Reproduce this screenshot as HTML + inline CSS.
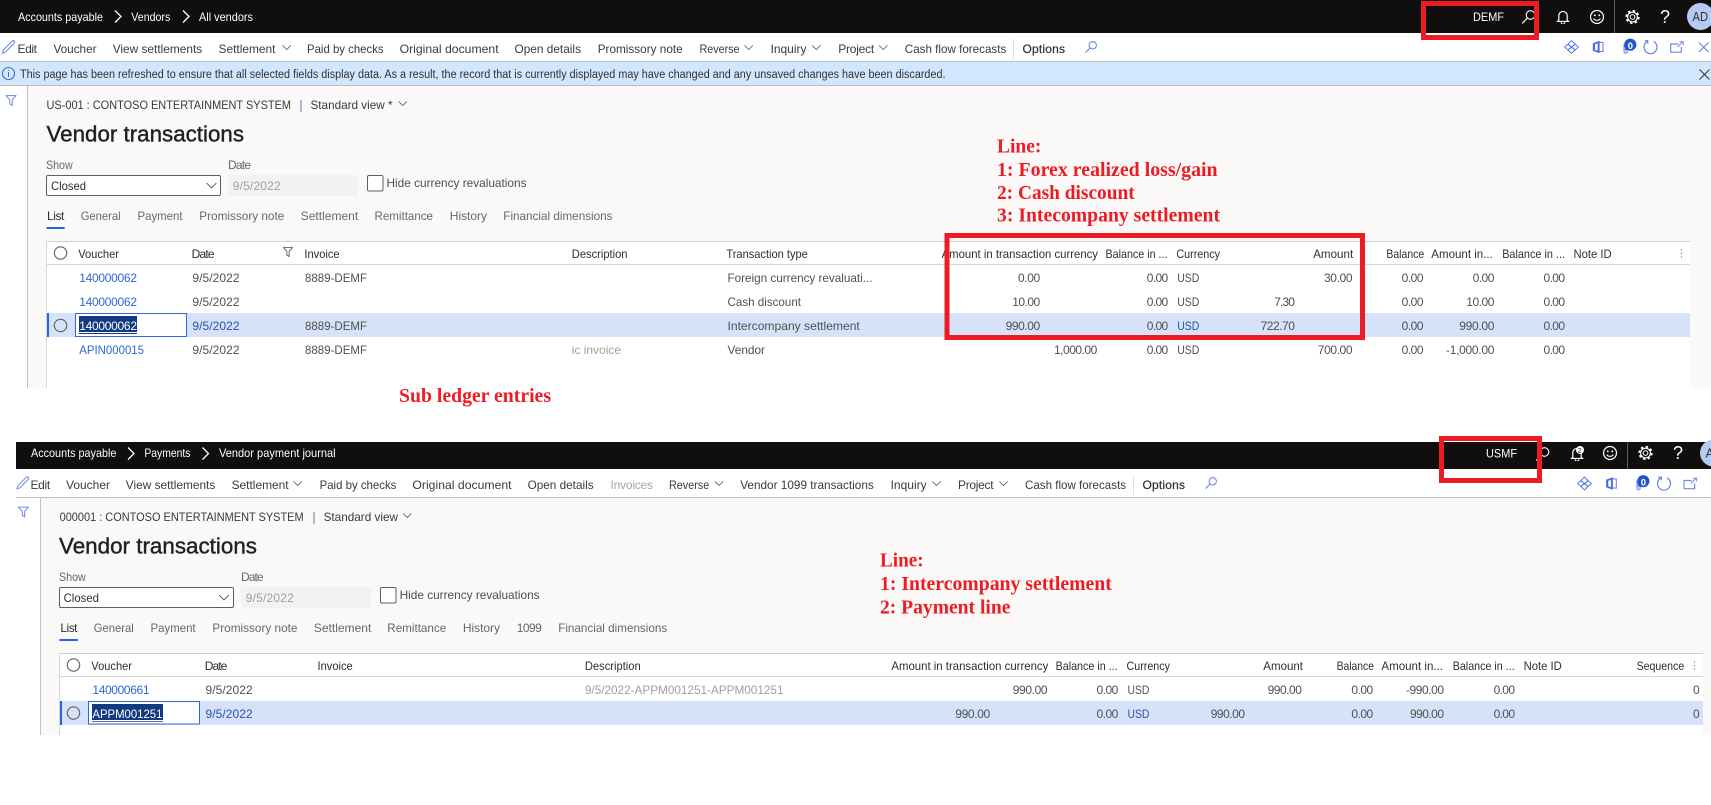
<!DOCTYPE html>
<html lang="en"><head><meta charset="utf-8"><title>Vendor transactions</title>
<style>
html,body{margin:0;padding:0;background:#fff;width:1711px;height:805px;overflow:hidden}
svg{display:block}
text{font-family:"Liberation Sans",sans-serif;font-size:12px;fill:#505050;white-space:pre}
.w{fill:#fff}.m{fill:#3b3a39}.o{fill:#252423;font-weight:bold;font-size:11.5px}.i{fill:#323130;font-size:11.5px}
.t{fill:#6a6866}.h{fill:#2f2e2d}.l{fill:#2f66d8}.s{fill:#2b55a8}.d{fill:#a19f9d}.c{fill:#323130;font-size:11.5px}
.n{font-size:22px;fill:#201f1e;stroke:#201f1e;stroke-width:.4}
.a{font-family:"Liberation Serif",serif;font-weight:bold;font-size:20px;fill:#ed1c24}
.ic{fill:none;stroke:#5a78e6;stroke-width:1.1}.wi{fill:none;stroke:#fff;stroke-width:1.2}.dk{fill:none;stroke:#605e5c;stroke-width:1.1}
</style></head><body>
<svg width="1711" height="805" viewBox="0 0 1711 805" xmlns="http://www.w3.org/2000/svg">
<defs>
<symbol id="chev" viewBox="0 0 10 6"><path d="M.5.5 5 5 9.5.5" fill="none" stroke="#605e5c" stroke-width=".9"/></symbol>
<symbol id="bc" viewBox="0 0 8 13"><path d="M1 .5 7 6.5 1 12.5" fill="none" stroke="#fff" stroke-width="1.3"/></symbol>
<symbol id="srch" viewBox="0 0 14 14"><circle cx="9" cy="5" r="4.3" fill="none" stroke="currentColor" stroke-width="1.1"/><path d="M5.9 8.1.7 13.4" stroke="currentColor" stroke-width="1.2"/></symbol>
<symbol id="bell" viewBox="0 0 14 15"><path d="M2.5 11V6a4.5 4.5 0 0 1 9 0v5l1.5 1.3H1Z" fill="none" stroke="#fff" stroke-width="1.3"/><path d="M5 13.2a2 2 0 0 0 4 0" fill="none" stroke="#fff" stroke-width="1.2"/></symbol>
<symbol id="smile" viewBox="0 0 16 16"><circle cx="8" cy="8" r="6.9" fill="none" stroke="#fff" stroke-width="1.3"/><circle cx="5.6" cy="6.2" r="1" fill="#fff"/><circle cx="10.4" cy="6.2" r="1" fill="#fff"/><path d="M4.4 9.6c1.6 2.6 5.6 2.6 7.2 0" fill="none" stroke="#fff" stroke-width="1.2"/></symbol>
<symbol id="gear" viewBox="0 0 16 16"><circle cx="8" cy="8" r="2.5" fill="none" stroke="#fff" stroke-width="1.1"/><circle cx="8" cy="8" r="5.2" fill="none" stroke="#fff" stroke-width="1.2"/><circle cx="8" cy="8" r="6.6" fill="none" stroke="#fff" stroke-width="2" stroke-dasharray="2.6 2.58"/></symbol>
<symbol id="diam" viewBox="0 0 15 14"><path d="M7.5.6 11 4 7.5 7 4 4ZM3.8 4.2 7.2 7 3.8 10 .6 7ZM11.2 4.2 14.4 7 11.2 10 7.8 7ZM7.5 7.2 11 10 7.5 13.4 4 10Z" fill="none" stroke="#5a78e6" stroke-width="1"/></symbol>
<symbol id="off" viewBox="0 0 12 14"><path d="M.8 3.2 7.6.8v12.4L.8 10.8Z" fill="#4a6ee0"/><path d="M3 4.2v5.6l2.6.8V3.4Z" fill="#fff"/><path d="M7.6 2.4h3.4v9.2H7.6" fill="none" stroke="#6d86e8" stroke-width="1.1"/></symbol>
<symbol id="clip" viewBox="0 0 15 16"><path d="M2.6 5.5v7.6a1.5 1.5 0 0 0 3 0V4.6" fill="none" stroke="#8a8fe8" stroke-width="1.4"/><circle cx="8.8" cy="6.2" r="6.1" fill="#1f57c8"/><path d="M4 8.6 3.4 12 6.6 10.6Z" fill="#1f57c8"/></symbol>
<symbol id="ref" viewBox="0 0 15 15"><path d="M4.4 1.9a6.5 6.5 0 1 0 6.2 0" fill="none" stroke="#5a78e6" stroke-width="1.1"/><path d="M1.8 1.2h3v3" fill="none" stroke="#5a78e6" stroke-width="1.1"/></symbol>
<symbol id="open" viewBox="0 0 14 12"><path d="M8.5 3H.7v8.2h10.6V6" fill="none" stroke="#7488e8" stroke-width="1.2"/><path d="M7.5 6 13 .8M9.5.7H13.3V4" fill="none" stroke="#7488e8" stroke-width="1"/></symbol>
<symbol id="x" viewBox="0 0 11 11"><path d="M.5.5 10.5 10.5M10.5.5.5 10.5" fill="none" stroke="currentColor" stroke-width="1"/></symbol>
<symbol id="filt" viewBox="0 0 11 11"><path d="M.6.6H10.4L6.7 5V10.4L4.3 9V5Z" fill="none" stroke="currentColor" stroke-width="1"/></symbol>
<symbol id="pen" viewBox="0 0 15 15"><path d="M1 14 2 10.6 11.4 1.2a1.6 1.6 0 0 1 2.3 2.3L4.3 12.9Z" fill="none" stroke="#6f86e8" stroke-width="1.1"/></symbol>
</defs>

<!-- PANEL 1 -->
<rect width="1711" height="33" fill="#100f0e"/>
<rect y="33" width="1711" height="28" fill="#fff"/>
<rect y="61" width="1711" height="1" fill="#c4c2c0"/>
<rect y="62" width="1711" height="23" fill="#d0e7fd"/>
<rect y="85" width="1711" height="1" fill="#bdbcbb"/>
<rect x="28" y="86" width="1683" height="302" fill="#faf9f8"/>
<rect x="27" y="86" width="1" height="302" fill="#c4c2c0"/>
<rect x="46.5" y="241" width="1643.5" height="147" fill="#fff"/>
<rect x="46" y="241" width="1644" height="1" fill="#d0cfce"/>
<rect x="46" y="241" width="1" height="147" fill="#d8d7d6"/>
<rect x="47" y="264" width="1643" height="1" fill="#d8d7d6"/>

<text class="w" x="18" y="21" textLength="85" lengthAdjust="spacingAndGlyphs">Accounts payable</text>
<use href="#bc" x="114" y="10" width="8" height="13"/>
<text class="w" x="131.3" y="21" textLength="39" lengthAdjust="spacingAndGlyphs">Vendors</text>
<use href="#bc" x="182" y="10" width="8" height="13"/>
<text class="w" x="199" y="21" textLength="54" lengthAdjust="spacingAndGlyphs">All vendors</text>

<use href="#pen" x="1.5" y="40" width="14" height="14"/>
<text class="m" x="17.5" y="53" textLength="19.5">Edit</text>
<text class="m" x="53.5" y="53" textLength="43" lengthAdjust="spacingAndGlyphs">Voucher</text>
<text class="m" x="112.7" y="53" textLength="89.5" lengthAdjust="spacingAndGlyphs">View settlements</text>
<text class="m" x="218.5" y="53" textLength="57" lengthAdjust="spacingAndGlyphs">Settlement</text>
<use href="#chev" x="282" y="45" width="9.5" height="5.5"/>
<text class="m" x="307" y="53" textLength="76.6" lengthAdjust="spacingAndGlyphs">Paid by checks</text>
<text class="m" x="399.6" y="53" textLength="99" lengthAdjust="spacingAndGlyphs">Original document</text>
<text class="m" x="514.5" y="53" textLength="66.5" lengthAdjust="spacingAndGlyphs">Open details</text>
<text class="m" x="597.7" y="53" textLength="85" lengthAdjust="spacingAndGlyphs">Promissory note</text>
<text class="m" x="699.5" y="53" textLength="40" lengthAdjust="spacingAndGlyphs">Reverse</text>
<use href="#chev" x="744" y="45" width="9.5" height="5.5"/>
<text class="m" x="770.5" y="53" textLength="36">Inquiry</text>
<use href="#chev" x="811.6" y="45" width="9.5" height="5.5"/>
<text class="m" x="838.2" y="53" textLength="36">Project</text>
<use href="#chev" x="878.5" y="45" width="9.5" height="5.5"/>
<text class="m" x="904.8" y="53" textLength="101.5" lengthAdjust="spacingAndGlyphs">Cash flow forecasts</text>
<rect x="1013" y="39" width="1" height="20" fill="#e1dfdd"/>
<text class="h" x="1022.5" y="53" textLength="42.5" style="stroke:#2f2e2d;stroke-width:.2">Options</text>
<use href="#srch" x="1085" y="41" width="12" height="12" color="#5a78e6"/>

<text class="w" x="1473" y="21" textLength="31" lengthAdjust="spacingAndGlyphs">DEMF</text>
<use href="#srch" x="1521.5" y="10" width="14" height="14" color="#fff"/>
<use href="#bell" x="1556.5" y="10" width="13" height="14"/>
<use href="#smile" x="1589.5" y="9.5" width="15" height="15"/>
<rect x="1614" y="0" width="1" height="33" fill="#605e5c"/>
<use href="#gear" x="1625" y="9.5" width="15" height="15"/>
<text class="w" x="1660" y="23" style="font-size:18px" textLength="10">?</text>
<circle cx="1700.5" cy="16.5" r="13.5" fill="#b6cbf3"/>
<text x="1692.5" y="21" style="fill:#323130;font-size:12.5px" textLength="15.5" lengthAdjust="spacingAndGlyphs">AD</text>

<use href="#diam" x="1564" y="40" width="15" height="14"/>
<use href="#off" x="1592" y="40" width="12" height="14"/>
<use href="#clip" x="1621.5" y="38.5" width="15" height="16"/>
<text class="w" x="1627.8" y="48.8" style="font-size:9.5px;font-weight:bold">0</text>
<use href="#ref" x="1643" y="39.5" width="15" height="15"/>
<use href="#open" x="1670" y="41" width="14" height="12"/>
<use href="#x" x="1698.5" y="42" width="10.5" height="10.5" color="#5a78e6"/>

<circle cx="8.5" cy="73.5" r="6" class="ic" style="stroke:#4a68c8"/>
<path d="M8.5 72v5M8.5 69.6v1.2" stroke="#4a68c8" stroke-width="1"/>
<text class="i" x="20" y="78" textLength="925.5" lengthAdjust="spacingAndGlyphs">This page has been refreshed to ensure that all selected fields display data. As a result, the record that is currently displayed may have changed and any unsaved changes have been discarded.</text>
<use href="#x" x="1699" y="69" width="11" height="11" color="#323130"/>

<use href="#filt" x="5.5" y="95" width="11" height="11" color="#6f86e8"/>
<text class="m" x="46.5" y="109" textLength="244.5" lengthAdjust="spacingAndGlyphs">US-001 : CONTOSO ENTERTAINMENT SYSTEM</text>
<rect x="300.5" y="100" width="1" height="12" fill="#5d7cc4"/>
<text class="m" x="310.5" y="109" textLength="82" lengthAdjust="spacingAndGlyphs">Standard view *</text>
<use href="#chev" x="398" y="101" width="9.5" height="5.5"/>
<text class="n" x="46.5" y="141.5" textLength="197.5" lengthAdjust="spacingAndGlyphs">Vendor transactions</text>

<text class="t" x="46" y="169" textLength="26.7" lengthAdjust="spacingAndGlyphs">Show</text>
<text class="t" x="228" y="169" textLength="23">Date</text>
<rect x="46.5" y="175.5" width="174" height="20" rx="1.5" fill="#fff" stroke="#605e5c"/>
<text class="h" x="51" y="190" textLength="35" lengthAdjust="spacingAndGlyphs">Closed</text>
<use href="#chev" x="206" y="182.5" width="11" height="6.5"/>
<rect x="228" y="175" width="130" height="21" rx="1" fill="#f3f2f1"/>
<text class="d" x="232.7" y="190" textLength="48">9/5/2022</text>
<rect x="367.5" y="175.5" width="15.5" height="15.5" rx="1.5" fill="#fff" stroke="#605e5c"/>
<text class="t" x="386.5" y="187" textLength="140" style="fill:#4f4e4d" lengthAdjust="spacingAndGlyphs">Hide currency revaluations</text>

<text class="h" x="47" y="220" textLength="17.4">List</text>
<text class="t" x="80.7" y="220" textLength="40" lengthAdjust="spacingAndGlyphs">General</text>
<text class="t" x="137.5" y="220" textLength="45" lengthAdjust="spacingAndGlyphs">Payment</text>
<text class="t" x="199.3" y="220" textLength="85" lengthAdjust="spacingAndGlyphs">Promissory note</text>
<text class="t" x="300.7" y="220" textLength="57.5" lengthAdjust="spacingAndGlyphs">Settlement</text>
<text class="t" x="374.5" y="220" textLength="58.5" lengthAdjust="spacingAndGlyphs">Remittance</text>
<text class="t" x="449.8" y="220" textLength="37.2">History</text>
<text class="t" x="503.3" y="220" textLength="109.2" lengthAdjust="spacingAndGlyphs">Financial dimensions</text>
<rect x="46.5" y="227" width="18.2" height="2" fill="#2266e3"/>

<circle cx="60.5" cy="253" r="6.2" class="dk"/>
<text class="h" x="78.2" y="258" textLength="40.8" lengthAdjust="spacingAndGlyphs">Voucher</text>
<text class="h" x="191.6" y="258" textLength="23">Date</text>
<use href="#filt" x="283" y="247" width="10" height="10" color="#605e5c"/>
<text class="h" x="304.4" y="258" textLength="35.2" lengthAdjust="spacingAndGlyphs">Invoice</text>
<text class="h" x="571.8" y="258" textLength="55.7" lengthAdjust="spacingAndGlyphs">Description</text>
<text class="h" x="726.4" y="258" textLength="81.4" lengthAdjust="spacingAndGlyphs">Transaction type</text>
<text class="h" x="941.6" y="258" textLength="156.4" lengthAdjust="spacingAndGlyphs">Amount in transaction currency</text>
<text class="h" x="1105.5" y="258" textLength="62" lengthAdjust="spacingAndGlyphs">Balance in ...</text>
<text class="h" x="1176.4" y="258" textLength="43.6" lengthAdjust="spacingAndGlyphs">Currency</text>
<text class="h" x="1313.2" y="258" textLength="40" lengthAdjust="spacingAndGlyphs">Amount</text>
<text class="h" x="1386.4" y="258" textLength="37.8" lengthAdjust="spacingAndGlyphs">Balance</text>
<text class="h" x="1431.3" y="258" textLength="61.5" lengthAdjust="spacingAndGlyphs">Amount in...</text>
<text class="h" x="1502.2" y="258" textLength="62.8" lengthAdjust="spacingAndGlyphs">Balance in ...</text>
<text class="h" x="1573.5" y="258" textLength="38.2" lengthAdjust="spacingAndGlyphs">Note ID</text>
<path d="M1681.5 249.5v1M1681.5 253v1M1681.5 256.5v1" stroke="#605e5c" stroke-width="1.1"/>

<rect x="47" y="313" width="1643" height="24" fill="#d5e2fa"/>
<rect x="47" y="313" width="2" height="24" fill="#2266e3"/>
<circle cx="60.5" cy="325.5" r="6.2" class="dk"/>
<rect x="75.5" y="313.5" width="111" height="23" fill="#fff" stroke="#2f66d8"/>
<rect x="79" y="316" width="58" height="18" fill="#123a80"/>
<rect x="79" y="332" width="58" height="1" fill="#fff"/>

<text class="l" x="79.3" y="282" textLength="57.7">140000062</text>
<text x="192.4" y="282" textLength="47.2">9/5/2022</text>
<text x="305" y="282" textLength="62" lengthAdjust="spacingAndGlyphs">8889-DEMF</text>
<text x="727.5" y="282" textLength="145" lengthAdjust="spacingAndGlyphs">Foreign currency revaluati...</text>
<text x="1018" y="282" textLength="22.2">0.00</text>
<text x="1146.8" y="282" textLength="21.4">0.00</text>
<text x="1177.2" y="282" textLength="22.2" lengthAdjust="spacingAndGlyphs">USD</text>
<text x="1324" y="282" textLength="28.5">30.00</text>
<text x="1401.6" y="282" textLength="21.9">0.00</text>
<text x="1472.6" y="282" textLength="21.8">0.00</text>
<text x="1543.5" y="282" textLength="21.5">0.00</text>

<text class="l" x="79.3" y="306" textLength="57.7">140000062</text>
<text x="192.4" y="306" textLength="47.2">9/5/2022</text>
<text x="727.5" y="306" textLength="73.5" lengthAdjust="spacingAndGlyphs">Cash discount</text>
<text x="1012.2" y="306" textLength="28">10.00</text>
<text x="1146.8" y="306" textLength="21.4">0.00</text>
<text x="1177.2" y="306" textLength="22.2" lengthAdjust="spacingAndGlyphs">USD</text>
<text x="1274.2" y="306" textLength="20.7">7.30</text>
<text x="1401.6" y="306" textLength="21.9">0.00</text>
<text x="1466.3" y="306" textLength="28.1">10.00</text>
<text x="1543.5" y="306" textLength="21.5">0.00</text>

<text class="w" x="79.3" y="330" textLength="57.7">140000062</text>
<text class="s" x="192.4" y="330" textLength="47.2">9/5/2022</text>
<text x="305" y="330" textLength="62" lengthAdjust="spacingAndGlyphs">8889-DEMF</text>
<text x="727.5" y="330" textLength="132.3" lengthAdjust="spacingAndGlyphs">Intercompany settlement</text>
<text x="1005.6" y="330" textLength="34.6">990.00</text>
<text x="1146.8" y="330" textLength="21.4">0.00</text>
<text class="s" x="1177.2" y="330" textLength="22.2" lengthAdjust="spacingAndGlyphs">USD</text>
<text x="1260.6" y="330" textLength="34.3">722.70</text>
<text x="1401.6" y="330" textLength="21.9">0.00</text>
<text x="1459.3" y="330" textLength="35.1">990.00</text>
<text x="1543.5" y="330" textLength="21.5">0.00</text>

<text class="l" x="79.3" y="354" textLength="64.7" lengthAdjust="spacingAndGlyphs">APIN000015</text>
<text x="192.4" y="354" textLength="47.2">9/5/2022</text>
<text x="305" y="354" textLength="62" lengthAdjust="spacingAndGlyphs">8889-DEMF</text>
<text class="d" x="571.8" y="354" textLength="49.2">ic invoice</text>
<text x="727.5" y="354" textLength="37.5" lengthAdjust="spacingAndGlyphs">Vendor</text>
<text x="1054" y="354" textLength="43.3">1,000.00</text>
<text x="1146.8" y="354" textLength="21.4">0.00</text>
<text x="1177.2" y="354" textLength="22.2" lengthAdjust="spacingAndGlyphs">USD</text>
<text x="1317.8" y="354" textLength="34.7">700.00</text>
<text x="1401.6" y="354" textLength="21.9">0.00</text>
<text x="1446" y="354" textLength="48.4">-1,000.00</text>
<text x="1543.5" y="354" textLength="21.5">0.00</text>

<rect x="947" y="235.5" width="415.5" height="102" fill="none" stroke="#ed1c24" stroke-width="5"/>
<rect x="1423.5" y="3.5" width="113" height="34" fill="none" stroke="#ed1c24" stroke-width="5"/>

<text class="a" x="997" y="152.7" textLength="44.3" lengthAdjust="spacingAndGlyphs">Line:</text>
<text class="a" x="997" y="176" textLength="220.6" lengthAdjust="spacingAndGlyphs">1: Forex realized loss/gain</text>
<text class="a" x="997" y="199" textLength="137.7" lengthAdjust="spacingAndGlyphs">2: Cash discount</text>
<text class="a" x="997" y="221.7" textLength="223" lengthAdjust="spacingAndGlyphs">3: Intecompany settlement</text>
<text class="a" x="399" y="402" textLength="152" lengthAdjust="spacingAndGlyphs">Sub ledger entries</text>

<!-- PANEL 2 -->
<rect x="16" y="442" width="1695" height="27" fill="#100f0e"/>
<rect x="16" y="497" width="1695" height="1" fill="#c4c2c0"/>
<rect x="41" y="498" width="1670" height="237" fill="#faf9f8"/>
<rect x="40" y="498" width="1" height="237" fill="#c4c2c0"/>
<rect x="59.5" y="653" width="1643.5" height="82" fill="#fff"/>
<rect x="59" y="653" width="1644" height="1" fill="#d0cfce"/>
<rect x="59" y="653" width="1" height="82" fill="#d8d7d6"/>
<rect x="60" y="676" width="1643" height="1" fill="#d8d7d6"/>

<text class="w" x="31" y="457" textLength="85.4" lengthAdjust="spacingAndGlyphs">Accounts payable</text>
<use href="#bc" x="127" y="447" width="8" height="13"/>
<text class="w" x="144.4" y="457" textLength="46" lengthAdjust="spacingAndGlyphs">Payments</text>
<use href="#bc" x="201.5" y="447" width="8" height="13"/>
<text class="w" x="219" y="457" textLength="116.6" lengthAdjust="spacingAndGlyphs">Vendor payment journal</text>

<use href="#pen" x="16" y="476" width="13.5" height="14"/>
<text class="m" x="30.5" y="489" textLength="19.7">Edit</text>
<text class="m" x="66" y="489" textLength="44" lengthAdjust="spacingAndGlyphs">Voucher</text>
<text class="m" x="125.8" y="489" textLength="89.5" lengthAdjust="spacingAndGlyphs">View settlements</text>
<text class="m" x="231.6" y="489" textLength="57" lengthAdjust="spacingAndGlyphs">Settlement</text>
<use href="#chev" x="293" y="481" width="9.5" height="5.5"/>
<text class="m" x="319.6" y="489" textLength="76.8" lengthAdjust="spacingAndGlyphs">Paid by checks</text>
<text class="m" x="412.4" y="489" textLength="99.2" lengthAdjust="spacingAndGlyphs">Original document</text>
<text class="m" x="527.6" y="489" textLength="66" lengthAdjust="spacingAndGlyphs">Open details</text>
<text x="610.5" y="489" textLength="42.5" style="fill:#a8a6a4">Invoices</text>
<text class="m" x="669" y="489" textLength="40.2" lengthAdjust="spacingAndGlyphs">Reverse</text>
<use href="#chev" x="714" y="481" width="10" height="5.5"/>
<text class="m" x="740.2" y="489" textLength="133.6" lengthAdjust="spacingAndGlyphs">Vendor 1099 transactions</text>
<text class="m" x="890.6" y="489" textLength="36">Inquiry</text>
<use href="#chev" x="931.5" y="481" width="10" height="5.5"/>
<text class="m" x="958" y="489" textLength="35.6">Project</text>
<use href="#chev" x="998.5" y="481" width="10" height="5.5"/>
<text class="m" x="1025" y="489" textLength="101" lengthAdjust="spacingAndGlyphs">Cash flow forecasts</text>
<rect x="1133" y="475" width="1" height="20" fill="#e1dfdd"/>
<text class="h" x="1142.5" y="489" textLength="42.5" style="stroke:#2f2e2d;stroke-width:.2">Options</text>
<use href="#srch" x="1205" y="477" width="12" height="12" color="#5a78e6"/>

<use href="#srch" x="1535.5" y="447" width="14" height="14" color="#fff"/>
<text class="w" x="1486" y="457.5" textLength="31" lengthAdjust="spacingAndGlyphs">USMF</text>
<use href="#bell" x="1570.5" y="447" width="13" height="14"/>
<circle cx="1580" cy="450" r="4" fill="#fff"/>
<text x="1577.8" y="453" style="font-size:7px;fill:#100f0e">2</text>
<use href="#smile" x="1602.5" y="445.5" width="15" height="15"/>
<rect x="1627" y="442" width="1" height="27" fill="#605e5c"/>
<use href="#gear" x="1638" y="445.5" width="15" height="15"/>
<text class="w" x="1673" y="459" style="font-size:18px" textLength="10">?</text>
<circle cx="1713.5" cy="453" r="13.5" fill="#b6cbf3"/>
<text x="1705.5" y="457.5" style="fill:#323130;font-size:12.5px">AD</text>

<use href="#diam" x="1577" y="476.5" width="15" height="14"/>
<use href="#off" x="1605.3" y="476.5" width="12" height="14"/>
<use href="#clip" x="1634.5" y="475" width="15" height="16"/>
<text class="w" x="1640.8" y="485.3" style="font-size:9.5px;font-weight:bold">0</text>
<use href="#ref" x="1656.5" y="476" width="15" height="15"/>
<use href="#open" x="1683.3" y="477.5" width="14" height="12"/>

<use href="#filt" x="18" y="506.5" width="11" height="11" color="#6f86e8"/>
<text class="m" x="59.6" y="521" textLength="244" lengthAdjust="spacingAndGlyphs">000001 : CONTOSO ENTERTAINMENT SYSTEM</text>
<rect x="313.5" y="512" width="1" height="12" fill="#5d7cc4"/>
<text class="m" x="323.6" y="521" textLength="74.4" lengthAdjust="spacingAndGlyphs">Standard view</text>
<use href="#chev" x="402.5" y="513" width="9.5" height="5.5"/>
<text class="n" x="59" y="553.3" textLength="198" lengthAdjust="spacingAndGlyphs">Vendor transactions</text>

<text class="t" x="59" y="581" textLength="26.8" lengthAdjust="spacingAndGlyphs">Show</text>
<text class="t" x="241" y="581" textLength="22.6">Date</text>
<rect x="59.5" y="587.5" width="174" height="20" rx="1.5" fill="#fff" stroke="#605e5c"/>
<text class="h" x="63.6" y="602" textLength="35.4" lengthAdjust="spacingAndGlyphs">Closed</text>
<use href="#chev" x="218.5" y="594.5" width="11" height="6.5"/>
<rect x="241" y="587" width="130" height="21" rx="1" fill="#f3f2f1"/>
<text class="d" x="245.8" y="602" textLength="48">9/5/2022</text>
<rect x="380.5" y="587.5" width="15.5" height="15.5" rx="1.5" fill="#fff" stroke="#605e5c"/>
<text class="t" x="399.6" y="599" textLength="140" style="fill:#4f4e4d" lengthAdjust="spacingAndGlyphs">Hide currency revaluations</text>

<text class="h" x="60.4" y="632" textLength="17.1">List</text>
<text class="t" x="93.8" y="632" textLength="40" lengthAdjust="spacingAndGlyphs">General</text>
<text class="t" x="150.5" y="632" textLength="45.1" lengthAdjust="spacingAndGlyphs">Payment</text>
<text class="t" x="212.4" y="632" textLength="85.1" lengthAdjust="spacingAndGlyphs">Promissory note</text>
<text class="t" x="313.8" y="632" textLength="57.5" lengthAdjust="spacingAndGlyphs">Settlement</text>
<text class="t" x="387.3" y="632" textLength="58.9" lengthAdjust="spacingAndGlyphs">Remittance</text>
<text class="t" x="462.9" y="632" textLength="37.1">History</text>
<text class="t" x="516.7" y="632" textLength="25.1">1099</text>
<text class="t" x="558.2" y="632" textLength="109" lengthAdjust="spacingAndGlyphs">Financial dimensions</text>
<rect x="59.3" y="639" width="18.5" height="2" fill="#2266e3"/>

<circle cx="73.5" cy="665" r="6.2" class="dk"/>
<text class="h" x="91.3" y="670" textLength="40.7" lengthAdjust="spacingAndGlyphs">Voucher</text>
<text class="h" x="204.7" y="670" textLength="22.6">Date</text>
<text class="h" x="317.5" y="670" textLength="35.2" lengthAdjust="spacingAndGlyphs">Invoice</text>
<text class="h" x="584.9" y="670" textLength="55.8" lengthAdjust="spacingAndGlyphs">Description</text>
<text class="h" x="891.4" y="670" textLength="156.9" lengthAdjust="spacingAndGlyphs">Amount in transaction currency</text>
<text class="h" x="1055.6" y="670" textLength="62" lengthAdjust="spacingAndGlyphs">Balance in ...</text>
<text class="h" x="1126.5" y="670" textLength="43.5" lengthAdjust="spacingAndGlyphs">Currency</text>
<text class="h" x="1263.3" y="670" textLength="39.7" lengthAdjust="spacingAndGlyphs">Amount</text>
<text class="h" x="1336.6" y="670" textLength="37.4" lengthAdjust="spacingAndGlyphs">Balance</text>
<text class="h" x="1381.4" y="670" textLength="61.6" lengthAdjust="spacingAndGlyphs">Amount in...</text>
<text class="h" x="1452.7" y="670" textLength="62" lengthAdjust="spacingAndGlyphs">Balance in ...</text>
<text class="h" x="1523.6" y="670" textLength="38.2" lengthAdjust="spacingAndGlyphs">Note ID</text>
<text class="h" x="1636.6" y="670" textLength="47.6" lengthAdjust="spacingAndGlyphs">Sequence</text>
<path d="M1694.5 661.5v1M1694.5 665v1M1694.5 668.5v1" stroke="#605e5c" stroke-width="1.1"/>

<rect x="60" y="701" width="1643" height="24" fill="#d5e2fa"/>
<rect x="60" y="701" width="2" height="24" fill="#2266e3"/>
<circle cx="73.5" cy="713" r="6.2" class="dk"/>
<rect x="88.5" y="701.5" width="111" height="22.5" fill="#fff" stroke="#2f66d8"/>
<rect x="92" y="704" width="71" height="17.7" fill="#123a80"/>
<rect x="92" y="720" width="71" height="1" fill="#fff"/>

<text class="l" x="92.4" y="694" textLength="57.1">140000661</text>
<text x="205.5" y="694" textLength="47.2">9/5/2022</text>
<text class="d" x="584.9" y="694" textLength="198.6" lengthAdjust="spacingAndGlyphs">9/5/2022-APPM001251-APPM001251</text>
<text x="1012.7" y="694" textLength="34.9">990.00</text>
<text x="1096.5" y="694" textLength="21.8">0.00</text>
<text x="1127.5" y="694" textLength="21.9" lengthAdjust="spacingAndGlyphs">USD</text>
<text x="1267.6" y="694" textLength="34.3">990.00</text>
<text x="1351.4" y="694" textLength="21.8">0.00</text>
<text x="1406" y="694" textLength="38">-990.00</text>
<text x="1493.6" y="694" textLength="21.4">0.00</text>
<text x="1693" y="694" textLength="6">0</text>

<text class="w" x="92.4" y="718" textLength="70" lengthAdjust="spacingAndGlyphs">APPM001251</text>
<text class="s" x="205.5" y="718" textLength="47.2">9/5/2022</text>
<text x="955.3" y="718" textLength="34.9">990.00</text>
<text x="1096.5" y="718" textLength="21.8">0.00</text>
<text class="s" x="1127.5" y="718" textLength="21.9" lengthAdjust="spacingAndGlyphs">USD</text>
<text x="1210.7" y="718" textLength="34.3">990.00</text>
<text x="1351.4" y="718" textLength="21.8">0.00</text>
<text x="1410" y="718" textLength="34">990.00</text>
<text x="1493.6" y="718" textLength="21.4">0.00</text>
<text x="1693" y="718" textLength="6">0</text>

<rect x="1441.5" y="438.5" width="98" height="42" fill="none" stroke="#ed1c24" stroke-width="5"/>

<text class="a" x="880" y="566.7" textLength="43.6" lengthAdjust="spacingAndGlyphs">Line:</text>
<text class="a" x="880" y="590" textLength="231.8" lengthAdjust="spacingAndGlyphs">1: Intercompany settlement</text>
<text class="a" x="880" y="613.3" textLength="130.4" lengthAdjust="spacingAndGlyphs">2: Payment line</text>
</svg>
</body></html>
